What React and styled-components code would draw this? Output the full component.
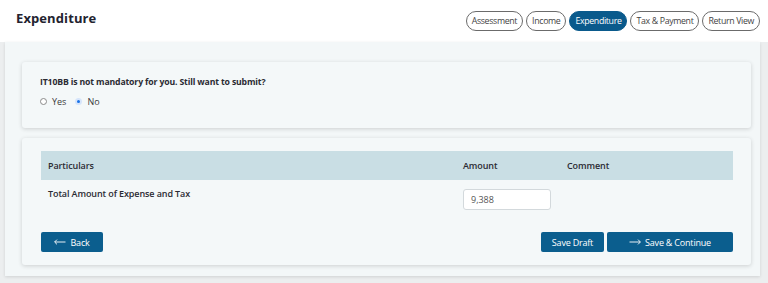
import React, { useState } from 'react';
import styled, { createGlobalStyle } from 'styled-components';

const GlobalStyle = createGlobalStyle`
  html, body {
    margin: 0;
    padding: 0;
    background: #eceeef;
  }
  body {
    font-family: "Open Sans", "Noto Sans", sans-serif;
    color: #2b2b33;
  }
`;

const Page = styled.div`
  width: 768px;
  height: 283px;
  overflow: hidden;
  background: #eceeef;
`;

const Header = styled.div`
  display: flex;
  align-items: center;
  justify-content: space-between;
  height: 36px;
  padding: 0 8px 6px 16px;
  background: #fff;
`;

const Title = styled.h1`
  margin: 0;
  font-size: 13px;
  font-weight: 700;
  color: #23232f;
  letter-spacing: 0.1px;
`;

const Tabs = styled.div`
  display: flex;
  gap: 3px;
  padding-top: 6px;
`;

const Tab = styled.button`
  height: 20px;
  padding: 0 5px;
  border-radius: 10px;
  border: 1px solid ${(p) => (p.$active ? '#0a5a8c' : '#6b6b6b')};
  background: ${(p) => (p.$active ? '#0a5a8c' : '#fff')};
  color: ${(p) => (p.$active ? '#fff' : '#444')};
  font-family: "Open Sans", sans-serif;
  font-size: 8.8px;
  letter-spacing: -0.35px;
  cursor: pointer;
`;

const Panel = styled.div`
  margin: 0 8px 0 5px;
  padding: 20px 9px 11px 17px;
  background: #f3f7f8;
  box-shadow: 0 1px 3px rgba(0, 0, 0, 0.12);
  display: flex;
  flex-direction: column;
  gap: 10px;
`;

const Card = styled.div`
  background: #f4f8f9;
  border-radius: 3px;
  box-shadow: 0 1px 4px rgba(0, 0, 0, 0.16);
  padding: ${(p) => p.$pad};
`;

const Question = styled.div`
  font-size: 8.7px;
  font-weight: 700;
  color: #2b2b33;
  letter-spacing: -0.15px;
`;

const Radios = styled.div`
  display: flex;
  gap: 9px;
  margin-top: 7px;
`;

const RadioLabel = styled.label`
  display: flex;
  align-items: center;
  gap: 5px;
  font-size: 9px;
  color: #3a3a3a;
  cursor: pointer;
`;

const RadioDot = styled.span`
  width: 7px;
  height: 7px;
  border-radius: 50%;
  box-sizing: border-box;
  border: ${(p) => (p.$checked ? '2px solid #d6e5fb' : '1px solid #8a8a8a')};
  background: ${(p) => (p.$checked ? '#1a73e8' : '#fff')};
`;

const Table = styled.div`
  display: flex;
  flex-direction: column;
`;

const Row = styled.div`
  display: grid;
  grid-template-columns: 415px 104px 1fr;
  align-items: ${(p) => (p.$head ? 'center' : 'start')};
  height: ${(p) => p.$h}px;
  padding-left: 7px;
  background: ${(p) => (p.$head ? '#c9dee4' : 'transparent')};
  font-size: 9px;
  font-weight: 600;
  color: #2b2b33;
  letter-spacing: -0.1px;
`;

const Cell = styled.div`
  padding-top: ${(p) => p.$pt || 0}px;
`;

const AmountInput = styled.input`
  display: block;
  width: 88px;
  height: 21px;
  box-sizing: border-box;
  border: 1px solid #d3d9dc;
  border-radius: 3px;
  background: #fff;
  padding: 0 7px;
  font-family: "Open Sans", sans-serif;
  font-size: 9px;
  color: #555;
  outline: none;
`;

const Actions = styled.div`
  display: flex;
  align-items: center;
  margin-top: 20px;
`;

const Spacer = styled.div`
  flex: 1;
`;

const Button = styled.button`
  display: flex;
  align-items: center;
  justify-content: center;
  gap: 4px;
  height: 20px;
  width: ${(p) => p.$w}px;
  margin-left: ${(p) => p.$ml || 0}px;
  border: none;
  border-radius: 2px;
  background: #0b5e8e;
  color: #fff;
  font-family: "Open Sans", sans-serif;
  font-size: 9px;
  letter-spacing: -0.2px;
  cursor: pointer;
`;

const Arrow = ({ dir }) => (
  <svg width="12" height="6" viewBox="0 0 12 6" fill="none" stroke="#fff" strokeWidth="0.9">
    {dir === 'left' ? (
      <path d="M11.5 3H0.8M3 0.6L0.6 3L3 5.4" />
    ) : (
      <path d="M0.5 3H11.2M9 0.6L11.4 3L9 5.4" />
    )}
  </svg>
);

const tabs = ['Assessment', 'Income', 'Expenditure', 'Tax & Payment', 'Return View'];

export default function App() {
  const [submit, setSubmit] = useState('no');
  return (
    <Page>
      <GlobalStyle />
      <Header>
        <Title>Expenditure</Title>
        <Tabs>
          {tabs.map((t) => (
            <Tab key={t} $active={t === 'Expenditure'}>{t}</Tab>
          ))}
        </Tabs>
      </Header>
      <Panel>
        <Card $pad="14px 18px 20px 18px">
          <Question>IT10BB is not mandatory for you. Still want to submit?</Question>
          <Radios>
            <RadioLabel onClick={() => setSubmit('yes')}>
              <RadioDot $checked={submit === 'yes'} />Yes
            </RadioLabel>
            <RadioLabel onClick={() => setSubmit('no')}>
              <RadioDot $checked={submit === 'no'} />No
            </RadioLabel>
          </Radios>
        </Card>
        <Card $pad="13px 18px 13px 19px">
          <Table>
            <Row $head $h={29}>
              <Cell>Particulars</Cell>
              <Cell>Amount</Cell>
              <Cell>Comment</Cell>
            </Row>
            <Row $h={32}>
              <Cell $pt={7}>Total Amount of Expense and Tax</Cell>
              <Cell $pt={9}><AmountInput defaultValue="9,388" /></Cell>
              <Cell />
            </Row>
          </Table>
          <Actions>
            <Button $w={62}><Arrow dir="left" /> Back</Button>
            <Spacer />
            <Button $w={63}>Save Draft</Button>
            <Button $w={126} $ml={3}><Arrow dir="right" /> Save &amp; Continue</Button>
          </Actions>
        </Card>
      </Panel>
    </Page>
  );
}
